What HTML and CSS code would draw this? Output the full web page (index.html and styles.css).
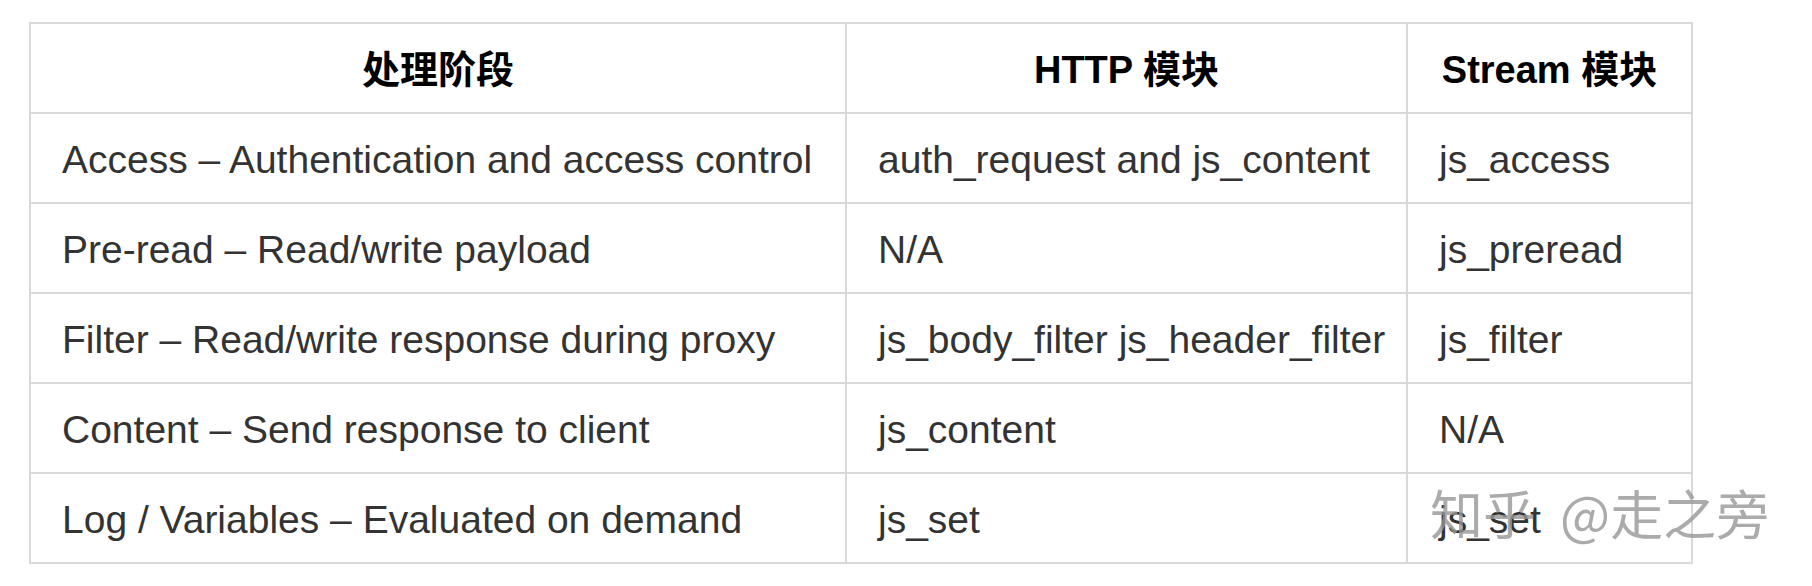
FILE: index.html
```html
<!DOCTYPE html>
<html lang="zh-CN">
<head>
<meta charset="utf-8">
<title>处理阶段</title>
<link rel="stylesheet" href="styles.css">
</head>
<body>
<div class="page">
  <table class="phases">
    <colgroup>
      <col class="c1"><col class="c2"><col class="c3">
    </colgroup>
    <thead>
      <tr><th>处理阶段</th><th>HTTP 模块</th><th>Stream 模块</th></tr>
    </thead>
    <tbody>
      <tr><td>Access – Authentication and access control</td><td>auth_request and js_content</td><td>js_access</td></tr>
      <tr><td>Pre-read – Read/write payload</td><td>N/A</td><td>js_preread</td></tr>
      <tr><td>Filter – Read/write response during proxy</td><td>js_body_filter js_header_filter</td><td>js_filter</td></tr>
      <tr><td>Content – Send response to client</td><td>js_content</td><td>N/A</td></tr>
      <tr><td>Log / Variables – Evaluated on demand</td><td>js_set</td><td>js_set</td></tr>
    </tbody>
  </table>
  <div class="watermark"><span class="wm-site">知乎</span><span class="wm-user">@走之旁</span></div>
</div>
</body>
</html>
```
FILE: styles.css
```css
html, body {
  margin: 0;
  padding: 0;
  background: #fff;
}
.page {
  position: relative;
  padding: 22px 0 0 29px;
  font-family: "Liberation Sans", "Noto Sans CJK SC", sans-serif;
}
.phases {
  border-collapse: collapse;
  width: 1662px;
  table-layout: fixed;
}
.c1 { width: 816px; }
.c2 { width: 561px; }
.c3 { width: 285px; }
.phases th,
.phases td {
  border: 2px solid #d9d9d9;
  height: 90px;
  padding: 0 0 0 31px;
  box-sizing: border-box;
  vertical-align: middle;
  white-space: nowrap;
}
.phases th {
  font-size: 38px;
  font-weight: bold;
  color: #000;
  text-align: center;
  padding: 0 0 4px 0;
}
.phases td {
  font-size: 39px;
  color: #333;
  text-align: left;
  padding-top: 4px;
}
.watermark {
  position: absolute;
  left: 1430px;
  top: 486px;
  font-family: "Noto Sans CJK SC", sans-serif;
  font-size: 53px;
  line-height: 1;
  color: rgba(150, 150, 150, 0.8);
  white-space: nowrap;
}
.wm-site {
  margin-right: 24px;
}
```
